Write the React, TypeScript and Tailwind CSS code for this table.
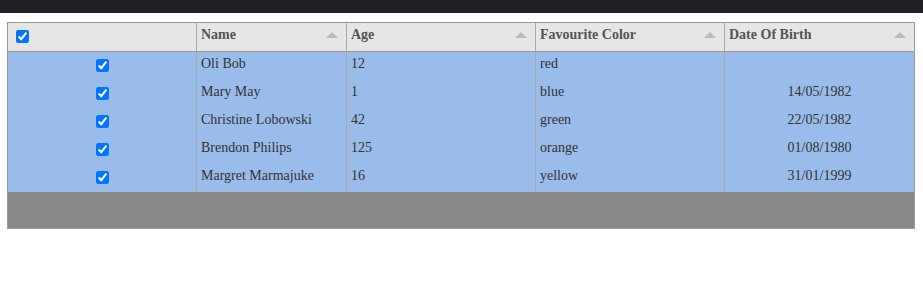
import React from "react";

interface Person {
  name: string;
  age: string;
  col: string;
  dob: string;
}

const people: Person[] = [
  { name: "Oli Bob", age: "12", col: "red", dob: "" },
  { name: "Mary May", age: "1", col: "blue", dob: "14/05/1982" },
  { name: "Christine Lobowski", age: "42", col: "green", dob: "22/05/1982" },
  { name: "Brendon Philips", age: "125", col: "orange", dob: "01/08/1980" },
  { name: "Margret Marmajuke", age: "16", col: "yellow", dob: "31/01/1999" },
];

const widths = ["w-[189px]", "w-[150px]", "w-[189px]", "w-[189px]", "w-[189px]"];

function SortArrow() {
  return (
    <div className="mt-[5px] h-0 w-0 border-x-[6px] border-b-[6px] border-x-transparent border-b-[#bbb]" />
  );
}

function HeaderCell({ title, width, last }: { title: string; width: string; last?: boolean }) {
  return (
    <div
      className={`${width} flex justify-between px-1 pt-1 pr-2 ${
        last ? "" : "border-r border-[#aaa]"
      }`}
    >
      <span className="font-bold text-[#555]">{title}</span>
      <SortArrow />
    </div>
  );
}

export default function App() {
  return (
    <div className="min-h-[293px] bg-white font-['Liberation_Serif',serif] text-[14px] leading-4">
      <div className="h-[13px] bg-[#1f2127]" />

      <div className="mt-[9px] ml-[7px] w-[908px] border border-[#999] bg-[#888]">
        {/* Header */}
        <div className="flex h-[29px] border-b border-[#999] bg-[#e6e6e6]">
          <div className="w-[189px] border-r border-[#aaa] px-1 pt-1">
            <input
              type="checkbox"
              checked
              readOnly
              className="mt-[3px] ml-1 block h-[13px] w-[13px]"
            />
          </div>
          <HeaderCell title="Name" width={widths[1]} />
          <HeaderCell title="Age" width={widths[2]} />
          <HeaderCell title="Favourite Color" width={widths[3]} />
          <HeaderCell title="Date Of Birth" width={widths[4]} last />
        </div>

        {/* Rows */}
        {people.map((p) => (
          <div key={p.name} className="flex h-[28px] bg-[#9abcea] text-[#333]">
            <div className="flex w-[189px] justify-center border-r border-[#aaa] pt-[7px]">
              <input type="checkbox" checked readOnly className="block h-[13px] w-[13px]" />
            </div>
            <div className="w-[150px] border-r border-[#aaa] px-1 pt-1">{p.name}</div>
            <div className="w-[189px] border-r border-[#aaa] px-1 pt-1">{p.age}</div>
            <div className="w-[189px] border-r border-[#aaa] px-1 pt-1">{p.col}</div>
            <div className="w-[189px] px-1 pt-1 text-center">{p.dob}</div>
          </div>
        ))}

        {/* Footer filler */}
        <div className="h-[36px] bg-[#888]" />
      </div>
    </div>
  );
}
